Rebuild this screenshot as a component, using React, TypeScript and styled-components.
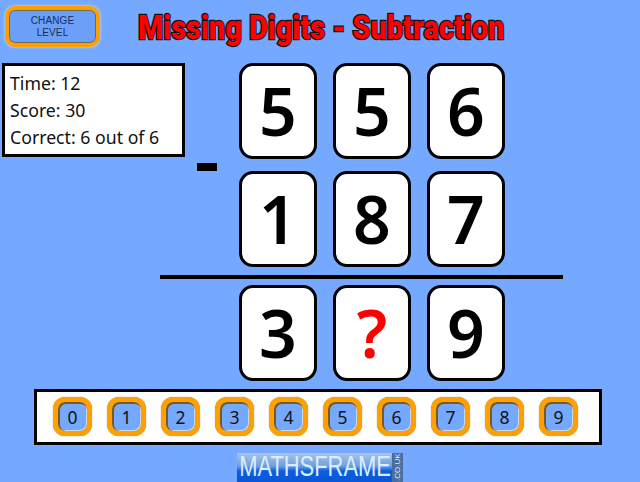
import React from 'react'
import styled, { createGlobalStyle } from 'styled-components'

const GlobalStyle = createGlobalStyle`
	html, body {
		margin: 0;
		padding: 0;
		background: #75a8ff;
		overflow: hidden;
	}
`

const Page = styled.div`
	width: 640px;
	height: 482px;
	overflow: hidden;
	font-family: 'Noto Sans', 'DejaVu Sans', sans-serif;
	color: #000;
`

const Header = styled.header`
	display: flex;
	align-items: flex-start;
	height: 63px;
	padding: 6px 0 0 5px;
	box-sizing: border-box;
`

const ChangeLevel = styled.button`
	width: 95px;
	height: 41px;
	flex: none;
	box-sizing: border-box;
	padding: 0;
	border: 4px solid #ff9f00;
	border-radius: 10px;
	background: #6b9ff8;
	box-shadow: inset 0 0 0 1px #6f6a50, 0 0 2px 1px #a9c6f5;
	font-family: 'Liberation Sans', Arial, sans-serif;
	font-size: 10px;
	line-height: 11.5px;
	letter-spacing: 0.1px;
	color: #1a2f58;
`

const Title = styled.h1`
	flex: none;
	margin: 3px 0 0 38px;
	width: 366px;
	font-family: 'Roboto', 'Liberation Sans', sans-serif;
	font-size: 34px;
	line-height: 36px;
	font-weight: 900;
	white-space: nowrap;
	color: #f00;
	-webkit-text-stroke: 2.4px #111;
	paint-order: stroke fill;
	transform-origin: left center;
	transform: scaleX(0.85);
`

const Board = styled.div`
	display: flex;
`

const SideColumn = styled.div`
	width: 239px;
	flex: none;
	padding-left: 2px;
	box-sizing: border-box;
`

const InfoBox = styled.div`
	width: 183px;
	height: 94px;
	box-sizing: border-box;
	border: 3px solid #000;
	background: #fff;
	padding: 4px 0 0 5px;
	font-size: 17.7px;
	line-height: 27px;
	color: #111;
`

const Minus = styled.div`
	width: 20px;
	height: 8px;
	margin: 6px 0 0 195px;
	background: #000;
`

const TileGrid = styled.div`
	display: grid;
	grid-template-columns: repeat(3, 78px);
	gap: 12px 16px;
`

const Tile = styled.div<{ $missing?: boolean }>`
	width: 78px;
	height: 96px;
	box-sizing: border-box;
	display: flex;
	align-items: center;
	justify-content: center;
	padding-bottom: 3px;
	border: 3px solid #000;
	border-radius: 14px;
	background: #fff;
	font-size: 66px;
	font-weight: 600;
	line-height: 1;
	color: ${p => (p.$missing ? '#f00' : '#000')};
`

const Rule = styled.div`
	width: 403px;
	height: 4px;
	margin: 8px 0 6px 160px;
	background: #000;
`

const AnswerRow = styled.div`
	display: flex;
	gap: 16px;
	padding-left: 239px;
`

const KeyPad = styled.div`
	display: flex;
	gap: 15px;
	width: 568px;
	height: 56px;
	margin: 8px 0 0 34px;
	box-sizing: border-box;
	padding: 5px 0 0 16px;
	border: 3px solid #000;
	background: #fff;
`

const Key = styled.button`
	width: 39px;
	height: 39px;
	box-sizing: border-box;
	padding: 0;
	border: 5px solid #ffa000;
	border-radius: 12px;
	background: #75a8ff;
	box-shadow: inset 1px 1px 0 1px #7a5a18, inset -1px -1px 0 0 #c9d8f0, 0 0 1px 0 #8a6a20;
	font-family: 'Noto Sans', sans-serif;
	font-size: 17.5px;
	color: #111;
`

const Logo = styled.div`
	display: flex;
	width: 166px;
	height: 29px;
	margin: 8px 0 0 237px;
	background: linear-gradient(#a8c6ea 0%, #6d9fe0 45%, #0a5fe0 62%, #0a55d8 100%);
`

const LogoName = styled.span`
	flex: none;
	height: 26px;
	margin-right: -60px;
	padding-left: 3px;
	font-family: 'Liberation Sans', Arial, sans-serif;
	font-size: 30px;
	line-height: 26px;
	white-space: nowrap;
	color: #dcecff;
	transform-origin: left center;
	transform: scaleX(0.73);
`

const LogoDomain = styled.span`
	width: 11px;
	flex: none;
	margin-left: auto;
	background: #4a6f9f;
	color: #dfe9f7;
	font-family: 'Liberation Sans', Arial, sans-serif;
	font-size: 8px;
	line-height: 11px;
	text-align: center;
	writing-mode: vertical-rl;
	transform: rotate(180deg);
`

const rows = ['556', '187']
const digits = [0, 1, 2, 3, 4, 5, 6, 7, 8, 9]

export default function App() {
	return (
		<Page>
			<GlobalStyle />
			<Header>
				<ChangeLevel>
					CHANGE
					<br />
					LEVEL
				</ChangeLevel>
				<Title>Missing Digits - Subtraction</Title>
			</Header>
			<Board>
				<SideColumn>
					<InfoBox>
						<div>Time: 12</div>
						<div>Score: 30</div>
						<div>Correct: 6 out of 6</div>
					</InfoBox>
					<Minus />
				</SideColumn>
				<TileGrid>
					{rows.map(row =>
						row.split('').map((d, i) => <Tile key={row + i}>{d}</Tile>)
					)}
				</TileGrid>
			</Board>
			<Rule />
			<AnswerRow>
				<Tile>3</Tile>
				<Tile $missing>?</Tile>
				<Tile>9</Tile>
			</AnswerRow>
			<KeyPad>
				{digits.map(d => (
					<Key key={d}>{d}</Key>
				))}
			</KeyPad>
			<Logo>
				<LogoName>MATHSFRAME</LogoName>
				<LogoDomain>.CO.UK</LogoDomain>
			</Logo>
		</Page>
	)
}
